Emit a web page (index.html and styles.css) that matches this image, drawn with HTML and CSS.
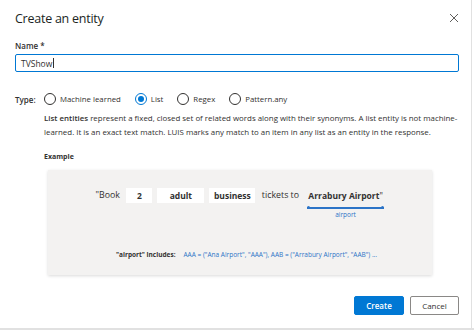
FILE: index.html
```html
<!DOCTYPE html>
<html>
<head>
<meta charset="utf-8">
<link rel="stylesheet" href="styles.css">
</head>
<body>
<div class="dialog">
  <div class="header">
    <h1 class="title">Create an entity</h1>
    <svg class="close" width="10" height="10" viewBox="0 0 10 10"><path d="M1 1L9 9M9 1L1 9" stroke="#605e5c" stroke-width="1" fill="none"/></svg>
  </div>
  <label class="label">Name *</label>
  <div class="input"><span>TVShow</span><span class="caret"></span></div>
  <div class="typerow">
    <span class="label type">Type:</span>
    <span class="opt"><span class="radio"></span>Machine learned</span>
    <span class="opt"><span class="radio on"></span>List</span>
    <span class="opt"><span class="radio"></span>Regex</span>
    <span class="opt"><span class="radio"></span>Pattern.any</span>
  </div>
  <p class="desc"><b>List entities</b> represent a fixed, closed set of related words along with their synonyms. A list entity is not machine-learned. It is an exact text match. LUIS marks any match to an item in any list as an entity in the response.</p>
  <div class="exlabel">Example</div>
  <div class="example">
    <div class="sentence">
      <span class="plain">"Book</span>
      <span class="chip c2">2</span>
      <span class="chip ca">adult</span>
      <span class="chip cb">business</span>
      <span class="plain">tickets to</span>
      <span class="ent"><span class="entword">Arrabury Airport<span class="q">"</span></span><span class="line"></span><span class="entname">airport</span></span>
    </div>
    <div class="includes"><b>"airport" includes:</b><span class="vals">AAA = ("Ana Airport", "AAA"), AAB = ("Arrabury Airport", "AAB") ...</span></div>
  </div>
  <div class="footer">
    <button class="btn primary">Create</button>
    <button class="btn">Cancel</button>
  </div>
</div>
</body>
</html>
```
FILE: styles.css
```css
html, body { margin: 0; padding: 0; }
body { background: #fff; width: 474px; height: 330px; overflow: hidden; font-family: "Open Sans", "Noto Sans", sans-serif; color: #323130; box-shadow: inset 0 -2px 0 #e1e1e1; }
.dialog { width: 472px; height: 328px; background: #fff; border-right: 1px solid #e1e1e1; box-sizing: border-box; padding: 0 12px 0 15px; display: flex; flex-direction: column; }
.header { display: flex; justify-content: space-between; align-items: center; height: 36px; }
.title { margin: 0; font-size: 12.5px; font-weight: 400; letter-spacing: -0.25px; color: #201f1e; }
.close { margin-right: 0; }
.label { font-size: 8px; font-weight: 600; color: #323130; }
.header + .label { margin-top: 4px; line-height: 12px; }
.input { margin-top: 2px; height: 18px; border: 1.5px solid #0078d4; border-radius: 2px; box-sizing: border-box; display: flex; align-items: center; padding-left: 5px; font-size: 8.5px; color: #323130; }
.caret { width: 1px; height: 10px; background: #323130; margin-left: 1px; }
.typerow { margin-top: 20px; display: flex; align-items: center; height: 14px; font-size: 7.8px; }
.type { width: 29px; }
.opt { display: flex; align-items: center; margin-right: 14px; color: #323130; }
.radio { width: 12px; height: 12px; border: 1px solid #323130; border-radius: 50%; box-sizing: border-box; margin-right: 4px; display: flex; align-items: center; justify-content: center; }
.radio.on { border-color: #0078d4; }
.radio.on::after { content: ""; width: 6px; height: 6px; border-radius: 50%; background: #0078d4; }
.desc { margin: 5px -6px 0 29px; font-size: 7.9px; line-height: 14px; color: #323130; }
.desc b { font-weight: 600; }
.exlabel { margin: 13px 0 0 29px; font-size: 7px; font-weight: 700; color: #323130; }
.example { margin: 9px 0 0 33px; width: 384px; height: 105px; background: #f3f2f1; box-shadow: 0 1px 3px rgba(0,0,0,0.15); box-sizing: border-box; display: flex; flex-direction: column; }
.sentence { display: flex; align-items: flex-start; justify-content: center; gap: 5px; margin-top: 18px; font-size: 8.5px; padding-right: 2px; }
.plain { height: 15px; line-height: 15px; margin: 0 1.5px; font-size: 8.8px; }
.chip { background: #fff; height: 15px; line-height: 15px; font-weight: 700; text-align: center; }
.c2 { width: 26px; }
.ca { width: 47px; }
.cb { width: 46px; }
.ent { display: flex; flex-direction: column; align-items: center; margin-left: 1.5px; }
.entword { height: 15px; line-height: 15px; font-weight: 700; }
.q { font-weight: 400; }
.line { width: 77px; height: 1.5px; background: #2b74c7; margin-top: 4px; position: relative; }
.line::before, .line::after { content: ""; position: absolute; top: -0.75px; width: 3px; height: 3px; border-radius: 50%; background: #2b74c7; }
.line::before { left: 0; } .line::after { right: 0; }
.entname { font-size: 6.5px; color: #2b74c7; margin-top: 1px; }
.includes { margin: 31px 0 0 68px; font-size: 6.5px; display: flex; }
.includes b { font-weight: 700; }
.vals { color: #2b74c7; margin-left: 8px; }
.footer { margin-top: auto; margin-bottom: 13px; display: flex; justify-content: flex-end; gap: 6px; }
.btn { font-family: inherit; font-size: 8px; height: 19px; width: 49px; border: 1px solid #8a8886; background: #fff; color: #323130; border-radius: 2px; padding: 0; }
.btn.primary { background: #0078d4; border-color: #0078d4; color: #fff; font-weight: 600; width: 50px; }
```
